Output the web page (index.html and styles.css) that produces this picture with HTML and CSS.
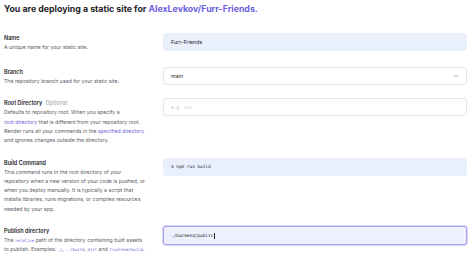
FILE: index.html
```html
<!DOCTYPE html>
<html lang="en">
<head>
    <meta charset="UTF-8">
    <title>Create Static Site</title>
    <link rel="stylesheet" href="styles.css">
</head>
<body>
    <h1>You are deploying a static site for <span class="repo">AlexLevkov/Furr-Friends.</span></h1>

    <div class="form">
        <div class="row first">
            <div class="info">
                <div class="label">Name</div>
                <div class="desc">A unique name for your static site.</div>
            </div>
            <div class="field filled">Furr-Friends</div>
        </div>

        <div class="row">
            <div class="info">
                <div class="label">Branch</div>
                <div class="desc">The repository branch used for your static site.</div>
            </div>
            <div class="field select">
                <span>main</span>
                <svg class="chevron" width="6" height="4" viewBox="0 0 6 4"><path d="M1 1 L3 3 L5 1" fill="none" stroke="#999" stroke-width="0.8"/></svg>
            </div>
        </div>

        <div class="row">
            <div class="info">
                <div class="label">Root Directory <span class="optional">Optional</span></div>
                <div class="desc">Defaults to repository root. When you specify a <a href="#">root directory</a> that is different from your repository root. Render runs all your commands in the <a href="#">specified directory</a> and ignores changes outside the directory.</div>
            </div>
            <div class="field mono placeholder">e.g. src</div>
        </div>

        <div class="row">
            <div class="info">
                <div class="label">Build Command</div>
                <div class="desc">This command runs in the root directory of your repository when a new version of your code is pushed, or when you deploy manually. It is typically a script that installs libraries, runs migrations, or compiles resources needed by your app.</div>
            </div>
            <div class="field filled mono">$ npm run build</div>
        </div>

        <div class="row">
            <div class="info">
                <div class="label">Publish directory</div>
                <div class="desc">The <code>relative</code> path of the directory containing built assets to publish. Examples: <code>./</code>, <code>../build</code>, <code>dist</code> and <code>frontend/build</code>.</div>
            </div>
            <div class="field focused mono">./backend/public<span class="caret"></span></div>
        </div>
    </div>
</body>
</html>
```
FILE: styles.css
```css
body {
    margin: 0;
    padding: 0 7px 0 4px;
    background-color: #ffffff;
    color: #222222;
    font-family: Inter, "Noto Sans", sans-serif;
}

h1 {
    margin: 1px 0 0 0;
    font-size: 8.8px;
    font-weight: 700;
    line-height: 15px;
    color: #24242a;
}

.repo {
    color: #6c5fe0;
}

.form {
    display: flex;
    flex-direction: column;
    gap: 12.4px;
    margin-top: 17px;
}

.row {
    display: grid;
    grid-template-columns: 148px 1fr;
    column-gap: 11px;
    align-items: start;
}

.row.first {
    min-height: 21.5px;
}

.info {
    max-width: 143px;
}

.label {
    font-size: 5.5px;
    font-weight: 600;
    line-height: 10px;
    color: #26262c;
}

.optional {
    font-weight: 400;
    color: #a0a0a8;
    margin-left: 2px;
}

.desc {
    font-size: 5.2px;
    line-height: 9.2px;
    color: #5c5c66;
}

.desc a {
    color: #6c5fe0;
    text-decoration: none;
    white-space: nowrap;
}

code {
    font-family: "DejaVu Sans Mono", "Liberation Mono", monospace;
    font-size: 4px;
    color: #6c5fe0;
}

.field {
    height: 18px;
    box-sizing: border-box;
    border: 1px solid #e6e6ea;
    border-radius: 3px;
    padding: 0 7px;
    display: flex;
    align-items: center;
    font-size: 5.3px;
    color: #26262c;
    background-color: #ffffff;
}

.field.filled {
    background-color: #e9f0fc;
    border-color: #e9f0fc;
}

.field.select {
    justify-content: space-between;
}

.field.mono {
    font-family: "DejaVu Sans Mono", "Liberation Mono", monospace;
    font-size: 4.4px;
}

.field.placeholder {
    color: #b0b0b8;
}

.field.focused {
    background-color: #eef0fd;
    border: 1px solid #aaa3ee;
    box-shadow: 0 0 0 1px #d8d4fa;
    height: 19px;
}

.caret {
    display: inline-block;
    width: 0.6px;
    height: 6px;
    background-color: #222;
    margin-left: 1px;
}
```
